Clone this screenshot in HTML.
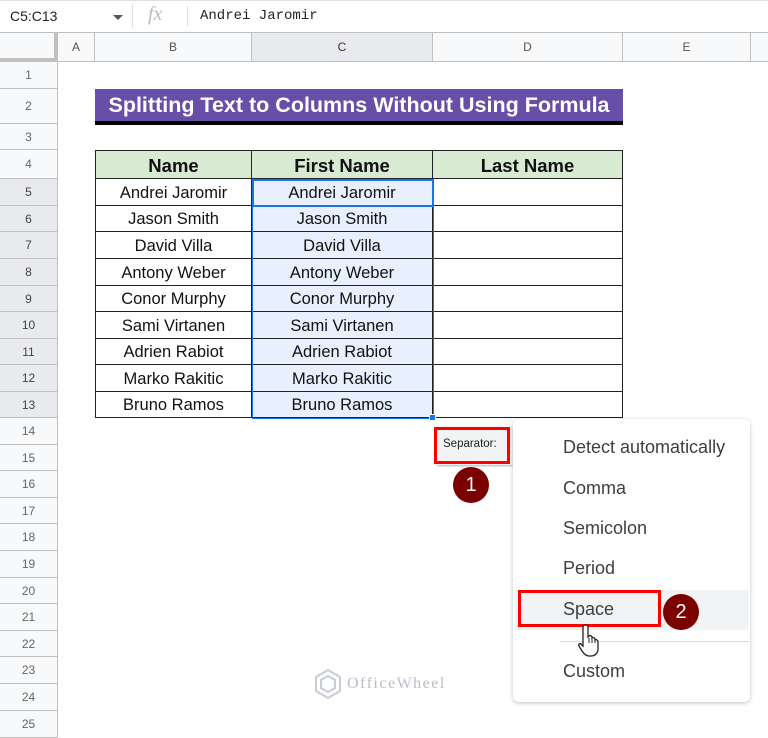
<!DOCTYPE html>
<html><head><meta charset="utf-8"><style>
*{margin:0;padding:0;box-sizing:border-box}
body{width:768px;height:722px;overflow:hidden;background:#fff;font-family:"Liberation Sans",Arial,sans-serif;position:relative}
.a{position:absolute}
.rh{position:absolute;left:0;width:58px;background:#f8f9fa;border-bottom:1px solid #c0c0c0;border-right:1px solid #c0c0c0;color:#666;font-size:12px;text-align:center;display:flex;align-items:center;justify-content:center}
.rh.s{background:#e8eaed;color:#444}
.ch{position:absolute;top:33px;height:29px;background:#f8f9fa;border-right:1px solid #c0c0c0;border-bottom:1px solid #c0c0c0;color:#555;font-size:12px;display:flex;align-items:center;justify-content:center}
.cell{position:absolute;display:flex;align-items:center;justify-content:center;font-size:16.5px;color:#111;border-right:1px solid #222;border-bottom:1px solid #222;padding-top:2px}
.mi{position:absolute;left:563px;font-size:18px;color:#3c4043}
.num{position:absolute;width:36px;height:36px;border-radius:50%;background:#7b0000;color:#fff;font-size:20px;display:flex;align-items:center;justify-content:center}
</style></head><body>
<div class="a" style="left:0;top:0;width:768px;height:33px;border-bottom:1px solid #c0c0c0;border-top:1px solid #e0e0e0"></div>
<div class="a" style="left:10px;top:8px;font-size:14px;color:#222">C5:C13</div>
<div class="a" style="left:113px;top:15px;width:0;height:0;border-left:5px solid transparent;border-right:5px solid transparent;border-top:5px solid #555"></div>
<div class="a" style="left:132px;top:4px;width:1px;height:24px;background:#ddd"></div>
<div class="a" style="left:148px;top:3px;font-family:'Liberation Serif',serif;font-style:italic;font-size:20px;color:#bbb">fx</div>
<div class="a" style="left:187px;top:6px;width:1px;height:20px;background:#ddd"></div>
<div class="a" style="left:200px;top:8px;font-family:'Liberation Mono',monospace;font-size:14px;color:#222">Andrei Jaromir</div>
<div class="ch" style="left:0;width:58px;border-right:4px solid #c0c0c0;border-bottom:4px solid #c0c0c0"></div>
<div class="ch" style="left:58px;width:37px">A</div>
<div class="ch" style="left:95px;width:157px">B</div>
<div class="ch" style="left:252px;width:181px;background:#e8eaed;color:#333">C</div>
<div class="ch" style="left:433px;width:190px">D</div>
<div class="ch" style="left:623px;width:128px">E</div>
<div class="ch" style="left:751px;width:17px;border-right:none"></div>
<div class="rh" style="top:62px;height:27px">1</div>
<div class="rh" style="top:89px;height:35px">2</div>
<div class="rh" style="top:124px;height:26px">3</div>
<div class="rh" style="top:150px;height:29px">4</div>
<div class="rh s" style="top:179px;height:27px">5</div>
<div class="rh s" style="top:206px;height:26px">6</div>
<div class="rh s" style="top:232px;height:27px">7</div>
<div class="rh s" style="top:259px;height:27px">8</div>
<div class="rh s" style="top:286px;height:26px">9</div>
<div class="rh s" style="top:312px;height:27px">10</div>
<div class="rh s" style="top:339px;height:26px">11</div>
<div class="rh s" style="top:365px;height:27px">12</div>
<div class="rh s" style="top:392px;height:26px">13</div>
<div class="rh" style="top:418px;height:27px">14</div>
<div class="rh" style="top:445px;height:26px">15</div>
<div class="rh" style="top:471px;height:27px">16</div>
<div class="rh" style="top:498px;height:26px">17</div>
<div class="rh" style="top:524px;height:27px">18</div>
<div class="rh" style="top:551px;height:27px">19</div>
<div class="rh" style="top:578px;height:26px">20</div>
<div class="rh" style="top:604px;height:27px">21</div>
<div class="rh" style="top:631px;height:26px">22</div>
<div class="rh" style="top:657px;height:27px">23</div>
<div class="rh" style="top:684px;height:27px">24</div>
<div class="rh" style="top:711px;height:27px">25</div>
<div class="a" style="left:95px;top:89px;width:528px;height:36px;background:#674ea7;border-bottom:4px solid #000;color:#fff;font-weight:bold;font-size:21.5px;display:flex;align-items:center;justify-content:center;padding-top:1px">Splitting Text to Columns Without Using Formula</div>
<div class="a" style="left:95px;top:150px;width:528px;height:268px;border-left:1px solid #222;border-top:1px solid #222"></div>
<div class="cell" style="left:96px;top:151px;width:156px;height:28px;background:#d9ead3;font-weight:bold;font-size:18.5px">Name</div>
<div class="cell" style="left:252px;top:151px;width:181px;height:28px;background:#d9ead3;font-weight:bold;font-size:18.5px">First Name</div>
<div class="cell" style="left:433px;top:151px;width:190px;height:28px;background:#d9ead3;font-weight:bold;font-size:18.5px">Last Name</div>

<div class="cell" style="left:96px;top:179px;width:156px;height:27px">Andrei Jaromir</div>
<div class="cell" style="left:96px;top:206px;width:156px;height:26px">Jason Smith</div>
<div class="cell" style="left:96px;top:232px;width:156px;height:27px">David Villa</div>
<div class="cell" style="left:96px;top:259px;width:156px;height:27px">Antony Weber</div>
<div class="cell" style="left:96px;top:286px;width:156px;height:26px">Conor Murphy</div>
<div class="cell" style="left:96px;top:312px;width:156px;height:27px">Sami Virtanen</div>
<div class="cell" style="left:96px;top:339px;width:156px;height:26px">Adrien Rabiot</div>
<div class="cell" style="left:96px;top:365px;width:156px;height:27px">Marko Rakitic</div>
<div class="cell" style="left:96px;top:392px;width:156px;height:26px">Bruno Ramos</div>

<div class="cell" style="left:252px;top:179px;width:181px;height:27px;background:#e8f0fe">Andrei Jaromir</div>
<div class="cell" style="left:252px;top:206px;width:181px;height:26px;background:#e8f0fe">Jason Smith</div>
<div class="cell" style="left:252px;top:232px;width:181px;height:27px;background:#e8f0fe">David Villa</div>
<div class="cell" style="left:252px;top:259px;width:181px;height:27px;background:#e8f0fe">Antony Weber</div>
<div class="cell" style="left:252px;top:286px;width:181px;height:26px;background:#e8f0fe">Conor Murphy</div>
<div class="cell" style="left:252px;top:312px;width:181px;height:27px;background:#e8f0fe">Sami Virtanen</div>
<div class="cell" style="left:252px;top:339px;width:181px;height:26px;background:#e8f0fe">Adrien Rabiot</div>
<div class="cell" style="left:252px;top:365px;width:181px;height:27px;background:#e8f0fe">Marko Rakitic</div>
<div class="cell" style="left:252px;top:392px;width:181px;height:26px;background:#e8f0fe">Bruno Ramos</div>

<div class="cell" style="left:433px;top:179px;width:190px;height:27px"></div>
<div class="cell" style="left:433px;top:206px;width:190px;height:26px"></div>
<div class="cell" style="left:433px;top:232px;width:190px;height:27px"></div>
<div class="cell" style="left:433px;top:259px;width:190px;height:27px"></div>
<div class="cell" style="left:433px;top:286px;width:190px;height:26px"></div>
<div class="cell" style="left:433px;top:312px;width:190px;height:27px"></div>
<div class="cell" style="left:433px;top:339px;width:190px;height:26px"></div>
<div class="cell" style="left:433px;top:365px;width:190px;height:27px"></div>
<div class="cell" style="left:433px;top:392px;width:190px;height:26px"></div>
<div class="a" style="left:252px;top:179px;width:182px;height:240px;border:1px solid #1a73e8"></div>
<div class="a" style="left:252px;top:179px;width:182px;height:28px;border:2px solid #1a73e8"></div>
<div class="a" style="left:429px;top:414px;width:7px;height:7px;background:#1a73e8;border:1px solid #fff"></div>
<div class="a" style="left:437px;top:427px;width:76px;height:38px;background:#f1f3f4;box-shadow:0 1px 2px rgba(0,0,0,.3)"></div>
<div class="a" style="left:434px;top:427px;width:76px;height:37px;border:3px solid #f00"></div>
<div class="a" style="left:443px;top:438px;font-size:11.5px;color:#222">Separator:</div>
<div class="num" style="left:453px;top:467px">1</div>
<div class="a" style="left:513px;top:419px;width:237px;height:283px;background:#fff;border-radius:6px;box-shadow:0 1px 4px rgba(0,0,0,.25)"></div>
<div class="a" style="left:515px;top:590px;width:234px;height:40px;background:#f1f3f4"></div>
<div class="mi" style="top:437px">Detect automatically</div>
<div class="mi" style="top:478px">Comma</div>
<div class="mi" style="top:518px">Semicolon</div>
<div class="mi" style="top:558px">Period</div>
<div class="mi" style="top:599px">Space</div>
<div class="a" style="left:560px;top:641px;width:189px;height:1px;background:#dadce0"></div>
<div class="mi" style="top:661px">Custom</div>
<div class="a" style="left:518px;top:590px;width:143px;height:37px;border:3px solid #f00"></div>
<div class="num" style="left:663px;top:594px">2</div>
<svg class="a" style="left:578px;top:623px" width="26" height="34" viewBox="0 0 26 34"><path d="M8 2c1.5 0 2 1 2 2v10l1-1c1-1 3 0 3 1v1c1-1 3 0 3 1v1c1-1 3 0 3 2v7c0 4-3 7-7 7h-2c-3 0-5-2-7-5l-3-5c-1-2 1-3 2-2l2 2V4c0-1 1-2 3-2z" fill="#fff" stroke="#222" stroke-width="1.3"/><path d="M11 15v5M14 16v4M17 17v3" stroke="#222" stroke-width="1"/></svg>
<svg class="a" style="left:313px;top:668px" width="30" height="32" viewBox="0 0 30 32"><path d="M15 2l12 7v14l-12 7-12-7V9z" fill="none" stroke="#c8ccd6" stroke-width="2"/><path d="M15 8l7 4v8l-7 4-7-4v-8z" fill="none" stroke="#c8ccd6" stroke-width="2"/></svg>
<div class="a" style="left:347px;top:675px;font-family:'Liberation Serif',serif;font-size:16px;letter-spacing:1.5px;color:#b8bcc8">OfficeWheel</div>
</body></html>
